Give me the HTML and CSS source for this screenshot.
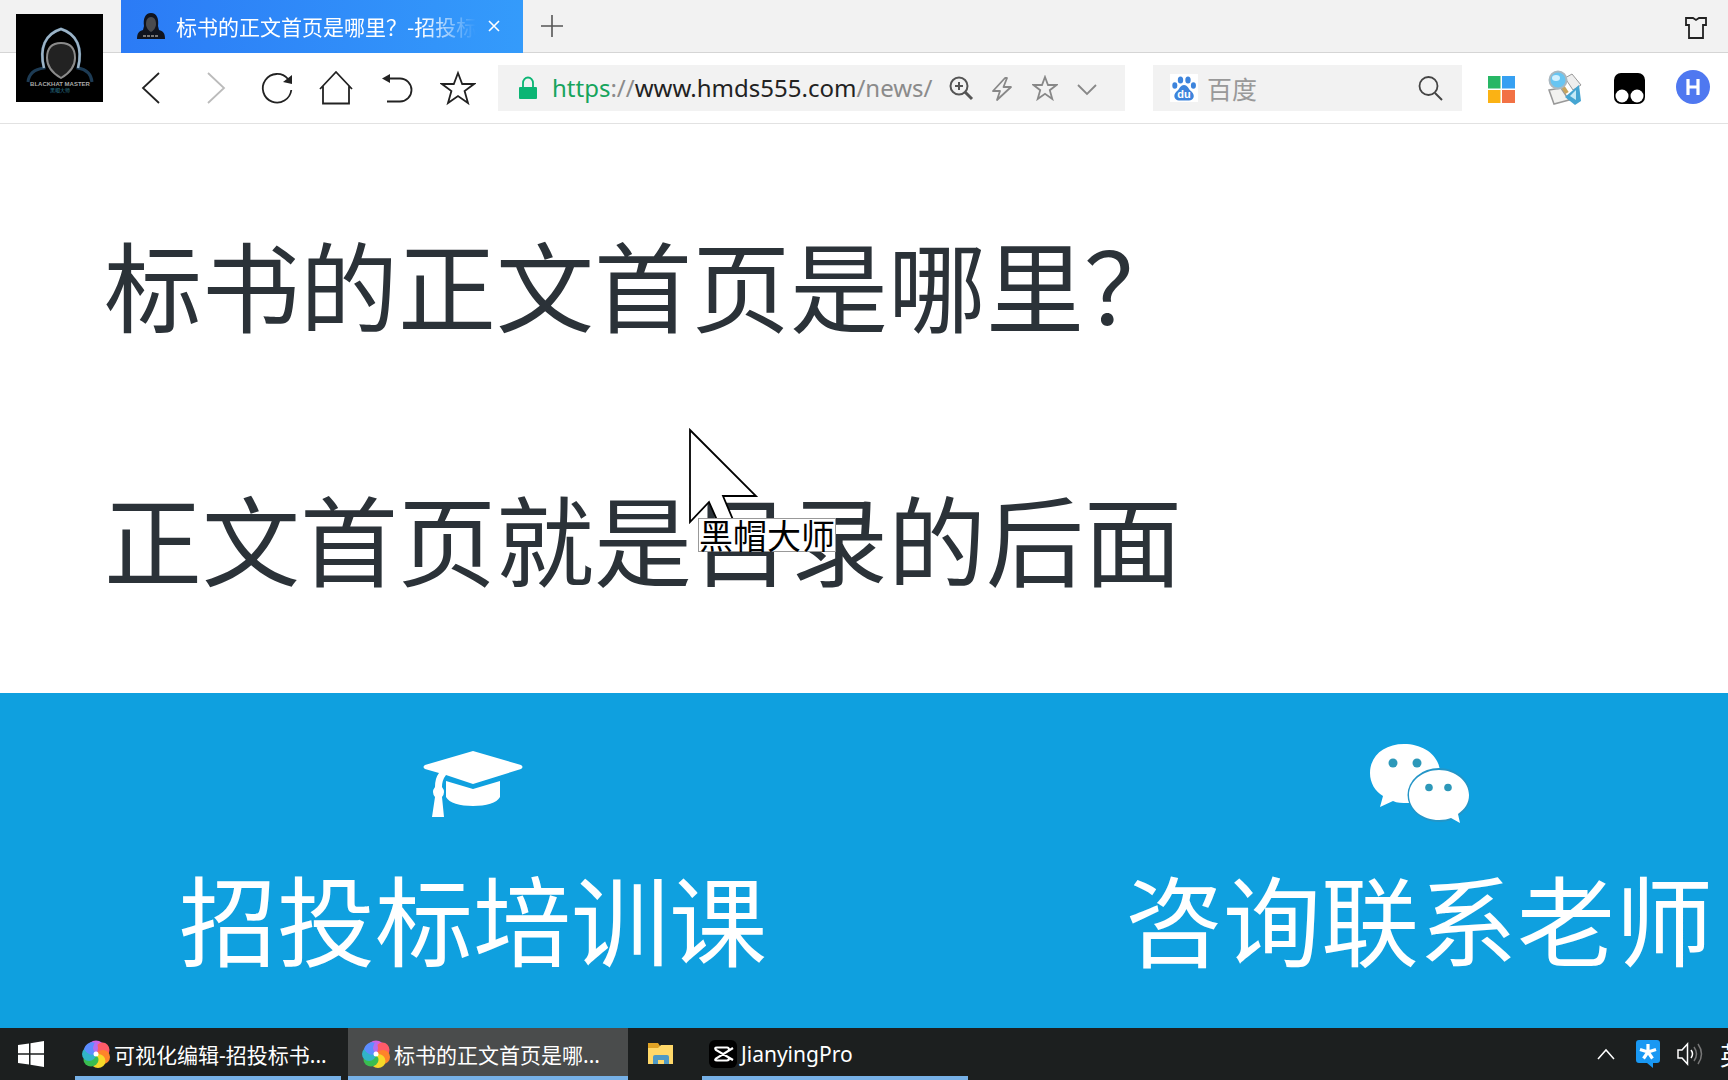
FILE: index.html
```html
<!DOCTYPE html>
<html lang="zh-cn">
	<head>
		<meta charset="utf-8">
		<title>标书的正文首页是哪里？-招投标</title>
		<link rel="stylesheet" href="styles.css">
	</head>

	<body>
		<header class="browser">
			<div class="tabbar">
				<div class="tab">
					<svg class="tab-icon" width="28" height="26" viewBox="0 0 28 26">
						<path d="M14 0C8 0 6 6 7 13L6 17C2 18 0 20 0 26H28C28 20 26 18 22 17L21 13C22 6 20 0 14 0Z" fill="#10141f"/>
						<path d="M14 4C10 4 9 8 9 11C9 15 12 18 14 19C16 18 19 15 19 11C19 8 18 4 14 4Z" fill="#4a4b4f"/>
						<path d="M6 23H22" stroke="#777" stroke-width="2" stroke-dasharray="3 1"/>
					</svg>
					<span class="tab-title">标书的正文首页是哪里？-招投标</span>
					<button class="icon-btn" aria-label="关闭标签">
						<svg width="14" height="14" viewBox="0 0 14 14"><path d="M2 2L12 12M12 2L2 12" stroke="#fff" stroke-width="1.6"/></svg>
					</button>
				</div>
				<button class="icon-btn new-tab" aria-label="新标签">
					<svg width="24" height="24" viewBox="0 0 24 24"><path d="M12 1V23M1 12H23" stroke="#555" stroke-width="1.6"/></svg>
				</button>
				<button class="icon-btn skin" aria-label="皮肤">
					<svg width="24" height="24" viewBox="0 0 24 24"><path d="M2 2H9L12 4L15 2H22V9H19V22H5V9H2Z" fill="none" stroke="#222" stroke-width="1.800"/></svg>
				</button>
			</div>

			<div class="toolbar">
				<nav class="nav">
					<button class="icon-btn" aria-label="后退">
						<svg width="36" height="36" viewBox="0 0 36 36"><path d="M26 3L10 18L26 33" fill="none" stroke="#222" stroke-width="1.800"/></svg>
					</button>
					<button class="icon-btn" aria-label="前进">
						<svg width="36" height="36" viewBox="0 0 36 36"><path d="M14 3L30 18L14 33" fill="none" stroke="#bbb" stroke-width="1.800"/></svg>
					</button>
					<button class="icon-btn" aria-label="刷新">
						<svg width="38" height="36" viewBox="0 0 38 36"><path d="M33 9A14.300 14.300 0 1 0 36.300 20" fill="none" stroke="#222" stroke-width="1.800"/><path d="M37 5V14L28 12Z" fill="#222"/></svg>
					</button>
					<button class="icon-btn" aria-label="主页">
						<svg width="36" height="36" viewBox="0 0 36 36"><path d="M2 19L18 2L34 19M5 16V33.500H31V16" fill="none" stroke="#222" stroke-width="1.800"/></svg>
					</button>
					<button class="icon-btn" aria-label="恢复">
						<svg width="36" height="36" viewBox="0 0 36 36"><path d="M8 8.500H21A11.500 11.500 0 0 1 21 31.500H8" fill="none" stroke="#222" stroke-width="1.800"/><path d="M3 8.500L11 4V13Z" fill="#222"/></svg>
					</button>
					<button class="icon-btn" aria-label="收藏">
						<svg width="36" height="36" viewBox="0 0 36 36"><path d="M18 3L22.200 14H34L24.600 21L28 33L18 26L8 33L11.400 21L2 14H13.800Z" fill="none" stroke="#222" stroke-width="1.800"/></svg>
					</button>
				</nav>

				<div class="address">
					<svg width="20" height="24" viewBox="0 0 20 24"><rect x="1" y="11" width="18" height="12" rx="1" fill="#0bb574"/><path d="M5 11V7A5 5.500 0 0 1 15 7V11" fill="none" stroke="#0bb574" stroke-width="1.800"/></svg>
					<a class="url" href="#"><span class="scheme">https</span>://<span class="host">www.hmds555.com</span>/news/</a>
					<button class="icon-btn" aria-label="放大">
						<svg width="26" height="26" viewBox="0 0 26 26"><circle cx="11" cy="11" r="8.500" fill="none" stroke="#555" stroke-width="2"/><path d="M17 17L24 24" stroke="#555" stroke-width="3"/><path d="M11 7V15M7 11H15" stroke="#555" stroke-width="2"/></svg>
					</button>
					<button class="icon-btn" aria-label="加速">
						<svg width="26" height="26" viewBox="0 0 26 26"><path d="M15 3L3 16H10L7 25L21 12H13.500L17 3Z" fill="none" stroke="#888" stroke-width="1.800" stroke-linejoin="round"/></svg>
					</button>
					<button class="icon-btn" aria-label="收藏本页">
						<svg width="26" height="26" viewBox="0 0 26 26"><path d="M13 2L16 10H24.500L17.800 15.200L20.300 24L13 18.800L5.700 24L8.200 15.200L1.500 10H10Z" fill="none" stroke="#888" stroke-width="1.800"/></svg>
					</button>
					<button class="icon-btn" aria-label="展开">
						<svg width="26" height="26" viewBox="0 0 26 26"><path d="M4 10L13 19L22 10" fill="none" stroke="#888" stroke-width="1.800"/></svg>
					</button>
				</div>

				<form class="search">
					<svg width="28" height="28" viewBox="0 0 28 28">
						<rect width="28" height="28" fill="#fff"/>
						<g fill="#3d84dc"><ellipse cx="10.500" cy="6" rx="2.700" ry="3.600"/><ellipse cx="18" cy="6" rx="2.700" ry="3.600"/><ellipse cx="4.800" cy="11.500" rx="2.500" ry="3.300"/><ellipse cx="23.400" cy="11.500" rx="2.500" ry="3.300"/><path d="M14 11C10 11 10 15 6.500 17.500C2.500 21 4.500 26.500 9 26.500H19C24 26.500 25.500 21 21.500 17.500C18 15 18 11 14 11Z"/></g>
						<text class="paw-text" x="14" y="24" text-anchor="middle">du</text>
					</svg>
					<input type="text" placeholder="百度" aria-label="搜索">
					<button class="icon-btn" type="button" aria-label="搜索">
						<svg width="26" height="26" viewBox="0 0 26 26"><circle cx="11.500" cy="11" r="9" fill="none" stroke="#444" stroke-width="1.800"/><path d="M18 18L25 25" stroke="#444" stroke-width="2"/></svg>
					</button>
				</form>

				<div class="plugins">
					<button class="icon-btn" aria-label="应用">
						<svg width="34" height="36" viewBox="0 0 34 36"><path d="M4 6H16.500V18.500H4Z" fill="#27b765"/><path d="M18 6H31V18.500H18Z" fill="#36a0f2"/><path d="M4 20H16.500V33H4Z" fill="#fbb214"/><path d="M18 20H31V33H18Z" fill="#f27144"/></svg>
					</button>
					<button class="icon-btn" aria-label="查词">
						<svg width="34" height="36" viewBox="0 0 34 36">
							<path d="M17 8L24 4L33 15L25 20Z" fill="#eee" stroke="#999"/>
							<path d="M1 20L13 18L21 30L6 34Z" fill="#f2f2f0" stroke="#999" stroke-width="1.500"/>
							<path d="M31 15L33 31L27 35L17 27Z" fill="#45a5d2"/><path d="M28 20V30L22 26Z" fill="#c4e9f6"/>
							<path d="M15 17L19 23" stroke="#c8a45d" stroke-width="4"/>
							<circle cx="10" cy="10" r="8.500" fill="#68c5f2" stroke="#aab8c0" stroke-width="2"/><ellipse cx="8" cy="8" rx="4" ry="3" fill="#d0f0ff"/>
						</svg>
					</button>
					<button class="icon-btn" aria-label="脚本">
						<svg width="34" height="36" viewBox="0 0 34 36"><rect x="2" y="3" width="31" height="31" rx="7" fill="#000"/><circle cx="10" cy="26" r="6.500" fill="#fff"/><circle cx="25" cy="26" r="6.500" fill="#fff"/></svg>
					</button>
					<button class="icon-btn" aria-label="账号">
						<svg width="34" height="36" viewBox="0 0 34 36"><circle cx="17" cy="17" r="17" fill="#4f78f0"/><path d="M12 9V25M22 9V25M12 17H22" stroke="#fff" stroke-width="3.200"/></svg>
					</button>
				</div>
			</div>

			<!-- 头像 -->
			<svg class="avatar" width="87" height="88" viewBox="0 0 87 88">
				<rect width="87" height="88" fill="#000"/>
				<path d="M12 68C13 58 20 55 28 54C23 34 29 20 45 15C61 20 67 34 62 54C68 55 75 58 76 68" fill="none" stroke="#1d3b54" stroke-width="3"/>
				<path d="M28 54C23 34 29 20 45 15C61 20 67 34 62 54" fill="none" stroke="#9db4c6" stroke-width="2.500"/>
				<path d="M45 29C35 29 31 35 31 44C31 54 38 60 45 64C52 60 59 54 59 44C59 35 55 29 45 29Z" fill="#222" stroke="#8b8b8b" stroke-width="2"/>
				<text class="avatar-name" x="44" y="72" text-anchor="middle">BLACKHAT MASTER</text>
				<text class="avatar-sub" x="44" y="78" text-anchor="middle">黑帽大师</text>
			</svg>
		</header>

		<main class="article">
			<h1>标书的正文首页是哪里？</h1>
			<p>正文首页就是目录的后面</p>
		</main>

		<nav class="links">
			<a class="link" href="#">
				<svg width="100" height="84" viewBox="0 0 100 84" fill="#fff">
					<path d="M50 9L98 23Q101 25 98 27L50 42L23 33Q19 38 19 45Q23 50 19 55L21 75H9L12 55Q8 50 12 45Q12 36 16 31L2 27Q-1 25 2 23Z"/>
					<path d="M23 39L50 47L77 39V55C74 61 63 64 50 64C37 64 26 61 23 55Z"/>
				</svg>
				<span>招投标培训课</span>
			</a>
			<a class="link" href="#">
				<svg width="100" height="84" viewBox="0 0 100 84">
					<path d="M35 2C15 2 1 14 1 31C1 41 6 49 14 54L11 65L24 59C28 61 33 61 39 61C57 60 71 47 71 31C71 14 55 2 35 2Z" fill="#fff"/>
					<ellipse cx="70" cy="53" rx="31.500" ry="27" fill="#2495c7"/>
					<path d="M70 28C54 28 40 39 40 53C40 68 54 78 70 78C75 78 79 77 82 76L91 81L89 72C96 67 100 61 100 53C100 39 86 28 70 28Z" fill="#fff"/>
					<g fill="#2d98b9"><circle cx="24" cy="21" r="4.500"/><circle cx="48" cy="21" r="4.500"/><circle cx="60" cy="45.500" r="3.800"/><circle cx="79" cy="45.500" r="3.800"/></g>
				</svg>
				<span>咨询联系老师</span>
			</a>
		</nav>

		<footer class="taskbar">
			<button class="start" aria-label="开始">
				<svg width="26" height="26" viewBox="0 0 26 26" fill="#fff"><path d="M0 4L11 2.500V12.300H0ZM12.500 2.300L26 0V12.300H12.500ZM0 13.700H11V23.500L0 22ZM12.500 13.700H26V26L12.500 23.700Z"/></svg>
			</button>
			<button class="task">
				<svg width="28" height="28" viewBox="0 0 28 28"><use href="#pinwheel"/></svg>
				<span>可视化编辑-招投标书...</span>
			</button>
			<button class="task active">
				<svg width="28" height="28" viewBox="0 0 28 28">
					<g id="pinwheel">
						<ellipse cx="14" cy="7.500" rx="8" ry="7" fill="#d45fe0"/>
						<ellipse cx="20.500" cy="10" rx="7" ry="7.500" fill="#ff5b68"/>
						<ellipse cx="21" cy="17" rx="7" ry="7" fill="#ff8429"/>
						<ellipse cx="16" cy="21" rx="7.500" ry="7" fill="#f6d929"/>
						<ellipse cx="9" cy="20" rx="7.500" ry="6.500" fill="#39bd50"/>
						<ellipse cx="7" cy="14" rx="7" ry="7" fill="#31b4c8"/>
						<path d="M2 9C4 3 9 1 14 3Q9 8 14 14Q7 17 2 9Z" fill="#5d8dff"/>
						<path d="M14 1Q8 8 14 14Q18 8 14 1Z" fill="#b76eed"/>
						<circle cx="14" cy="14" r="2.500" fill="#fff"/>
					</g>
				</svg>
				<span>标书的正文首页是哪...</span>
			</button>
			<button class="folder" aria-label="文件资源管理器">
				<svg width="26" height="22" viewBox="0 0 26 22"><path d="M0 0H10L12 3H25V21H0Z" fill="#e0a325"/><path d="M0 5H10L13 2H25V21H0Z" fill="#ffd869"/><path d="M5 21V14Q5 12 7 12H19Q21 12 21 14V21H16V17H10V21Z" fill="#4e99c5"/></svg>
			</button>
			<button class="task">
				<svg width="28" height="28" viewBox="0 0 28 28"><rect width="28" height="28" rx="6" fill="#000"/><path d="M24 8L7 18.500Q5 20.500 8 20.500H18Q20 20.500 20 18L24 20L7 10Q5 7.500 8 7.500H18Q20 7.500 20 10" fill="none" stroke="#fff" stroke-width="2.200"/></svg>
				<span>JianyingPro</span>
			</button>
			<div class="tray">
				<button class="icon-btn" aria-label="显示隐藏的图标">
					<svg width="22" height="12" viewBox="0 0 22 12"><path d="M1 11L9 2L17 11" fill="none" stroke="#fff" stroke-width="1.500"/></svg>
				</button>
				<button class="icon-btn" aria-label="消息">
					<svg width="24" height="28" viewBox="0 0 24 28"><path d="M3 0H21Q24 0 24 3V20Q24 23 21 23H17V28L11 23H3Q0 23 0 20V3Q0 0 3 0Z" fill="#1998f3"/><path d="M12 4V12M4 9.500L12 12M20 9.500L12 12M7.500 18.500L12 12M16.500 18.500L12 12" stroke="#fff" stroke-width="3.200"/></svg>
				</button>
				<button class="icon-btn" aria-label="音量">
					<svg width="26" height="24" viewBox="0 0 26 24" fill="none"><path d="M1 8H5L10.500 2V22L5 16H1Z" stroke="#fff" stroke-width="1.500"/><path d="M14 8Q17 12 14 16" stroke="#fff" stroke-width="1.500"/><path d="M17 5Q22 12 17 19M21 2Q28 12 21 22" stroke="#777" stroke-width="1.500"/></svg>
				</button>
				<span class="ime">英</span>
			</div>
		</footer>

		<!-- 鼠标指针 -->
		<div class="pointer">
			<svg width="70" height="110" viewBox="0 0 70 110"><path d="M1 2L67 68H34L50 106L36 110L20 74L1 94Z" fill="#fff" stroke="#000" stroke-width="1.800"/></svg>
			<span class="pointer-label">黑帽大师</span>
		</div>
	</body>
</html>
```
FILE: styles.css
```css
*{
	padding: 0;
	margin: 0;
	box-sizing: border-box;
}
body{
	position: relative;
	display: flex;
	flex-direction: column;
	min-height: 100vh;
	overflow: hidden;
	background: #fff;
	font-family: "Noto Sans", "Noto Sans CJK SC", sans-serif;
}
svg{
	display: block;
	flex: none;
}
a{
	color: inherit;
	text-decoration: none;
}
button{
	border: 0;
	background: none;
	color: inherit;
	font: inherit;
}
.icon-btn{
	flex: none;
}

/* 标签栏 */
.browser{
	position: relative;
	border-bottom: 1px solid #e2e2e2;
}
.tabbar{
	display: flex;
	align-items: center;
	height: 53px;
	padding: 0 20px 0 121px;
	background: #f2f2f2;
	border-bottom: 1px solid #d5d5d5;
}
.tab{
	display: flex;
	align-items: center;
	gap: 11px;
	width: 402px;
	height: 53px;
	padding: 0 22px 0 16px;
	background: linear-gradient(90deg, #2b7bf6, #349bfb);
	color: #fff;
}
.tab-title{
	flex: 1;
	overflow: hidden;
	font-family: "Noto Sans CJK SC", sans-serif;
	font-size: 21px;
	line-height: 32px;
	white-space: nowrap;
	-webkit-mask-image: linear-gradient(90deg, #000 82%, transparent 100%);
	mask-image: linear-gradient(90deg, #000 82%, transparent 100%);
}
.new-tab{
	margin-left: 17px;
}
.skin{
	margin-left: auto;
	padding-top: 4px;
}

/* 工具栏 */
.toolbar{
	display: flex;
	align-items: center;
	height: 70px;
	padding: 0 18px 0 133px;
}
.nav{
	display: flex;
	gap: 25px;
}
.address{
	display: flex;
	flex: 580 1 0;
	align-items: center;
	gap: 16px;
	min-width: 0;
	height: 46px;
	margin-left: 22px;
	padding: 0 25px 0 20px;
	background: #f2f2f2;
}
.url{
	flex: 1;
	margin: 0 -8px 0 -2px;
	overflow: hidden;
	color: #8b8b8b;
	font-size: 24px;
	line-height: 40px;
	white-space: nowrap;
}
.scheme{
	color: #16a45c;
}
.host{
	color: #222;
}
.search{
	display: flex;
	flex: 272 1 0;
	align-items: center;
	gap: 9px;
	min-width: 0;
	height: 46px;
	margin-left: 28px;
	padding: 0 19px 0 17px;
	background: #f2f2f2;
}
.search input{
	flex: 1;
	min-width: 0;
	border: 0;
	outline: 0;
	background: none;
	font-family: "Noto Sans CJK SC", sans-serif;
	font-size: 25px;
}
.search input::placeholder{
	color: #999;
}
.paw-text{
	fill: #fff;
	font: bold 11px "Liberation Sans", sans-serif;
}
.plugins{
	display: flex;
	gap: 30px;
	margin-left: 22px;
}
.avatar{
	position: absolute;
	left: 16px;
	top: 14px;
}
.avatar-name{
	fill: #aaa;
	font: bold 6px "Liberation Sans", sans-serif;
}
.avatar-sub{
	fill: #2c7a94;
	font: 5px "Noto Sans CJK SC", sans-serif;
}

/* 正文 */
.article{
	display: flex;
	flex: 1;
	flex-direction: column;
	justify-content: center;
	gap: 114px;
	padding: 0 104px;
	color: #2b3238;
	font-family: "Noto Sans CJK SC", sans-serif;
	font-size: 98px;
	line-height: 140px;
	white-space: nowrap;
}
.article h1{
	font-size: 98px;
	font-weight: normal;
}

/* 底部链接 */
.links{
	display: grid;
	grid-template-columns: 54.75vw 54.75vw;
	padding: 49px 0 42px;
	background: #0fa0df;
	color: #fff;
	font-family: "Noto Sans CJK SC", sans-serif;
	font-size: 98px;
	line-height: 140px;
	white-space: nowrap;
}
.link{
	display: flex;
	flex-direction: column;
	align-items: center;
	gap: 20px;
}

/* 任务栏 */
.taskbar{
	display: flex;
	height: 52px;
	overflow: hidden;
	background: #1c1f1f;
	color: #fff;
	font-family: "Noto Sans", "Noto Sans CJK SC", sans-serif;
	font-size: 21px;
	white-space: nowrap;
}
.start{
	width: 62px;
	margin-right: 13px;
	padding-left: 18px;
}
.task{
	display: flex;
	align-items: center;
	gap: 4px;
	width: 266px;
	margin-right: 7px;
	padding: 4px 7px 0;
	border-bottom: 4px solid #76b0e6;
}
.active{
	width: 280px;
	padding-left: 14px;
	background: #4a4c4c;
}
.folder{
	width: 67px;
	padding-left: 13px;
}
.tray{
	display: flex;
	align-items: center;
	gap: 17px;
	width: 131px;
	margin-left: auto;
}
.ime{
	flex: none;
	font-family: "Noto Sans CJK SC", sans-serif;
	font-size: 25px;
}

/* 指针 */
.pointer{
	position: absolute;
	left: 689px;
	top: 428px;
}
.pointer-label{
	position: absolute;
	left: 9px;
	top: 90px;
	border: 1px solid #999;
	background: #fff;
	color: #000;
	font-family: "Noto Sans CJK SC", sans-serif;
	font-size: 34px;
	line-height: 32px;
	white-space: nowrap;
}
```
